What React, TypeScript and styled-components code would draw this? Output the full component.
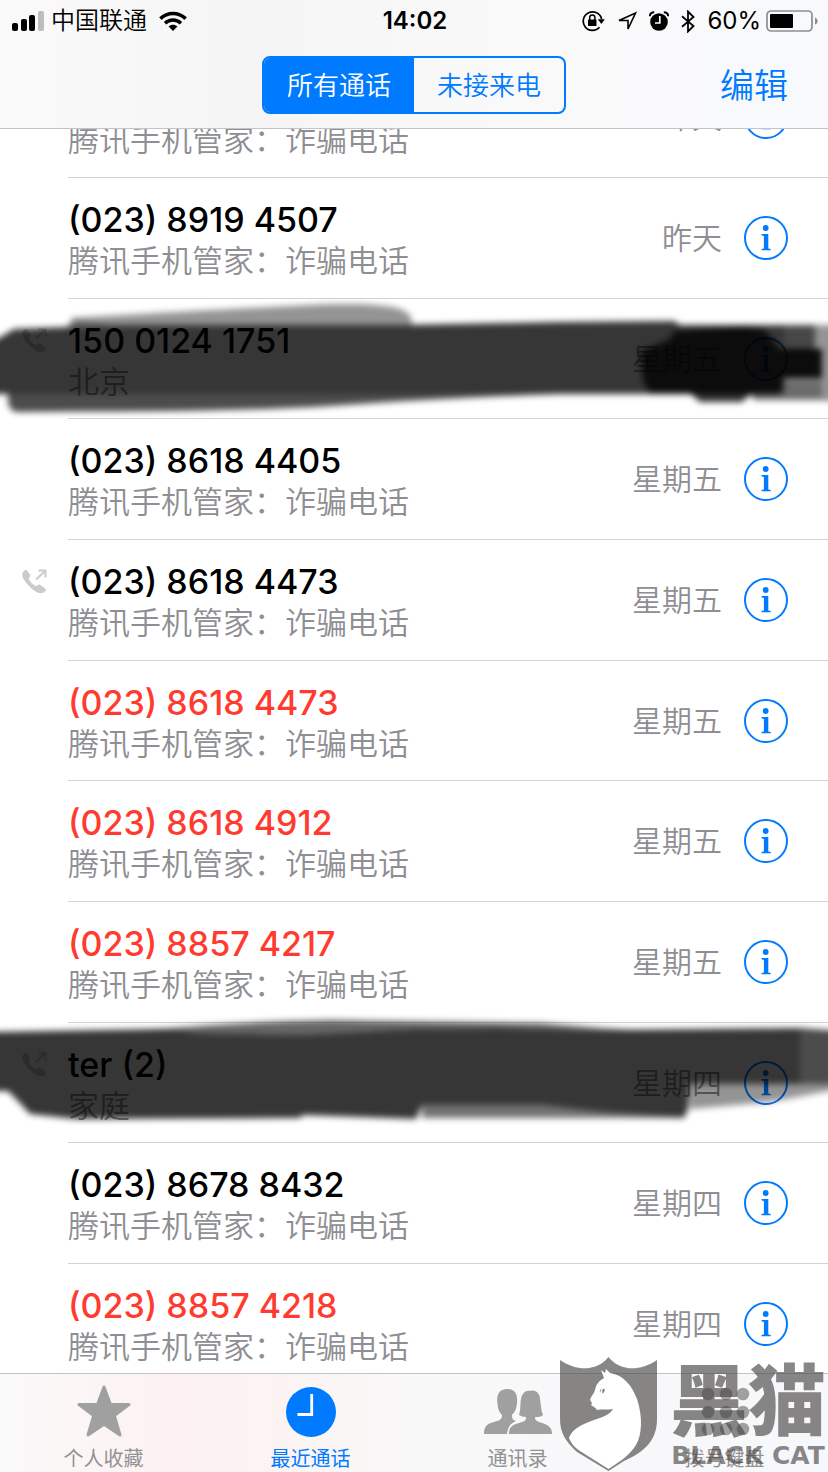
import React, { useState } from 'react'
import styled, { createGlobalStyle } from 'styled-components'

type SmearName = 'wide' | 'ragged'

interface Call {
  id: number
  title: string
  note: string
  day: string
  missed?: boolean
  outgoing?: boolean
  smear?: SmearName
}

const FRAUD = '腾讯手机管家：诈骗电话'

const calls: Call[] = [
  { id: 1, title: '(023) 8919 4507', note: FRAUD, day: '昨天' },
  { id: 2, title: '(023) 8919 4507', note: FRAUD, day: '昨天' },
  { id: 3, title: '150 0124 1751', note: '北京', day: '星期五', outgoing: true, smear: 'wide' },
  { id: 4, title: '(023) 8618 4405', note: FRAUD, day: '星期五' },
  { id: 5, title: '(023) 8618 4473', note: FRAUD, day: '星期五', outgoing: true },
  { id: 6, title: '(023) 8618 4473', note: FRAUD, day: '星期五', missed: true },
  { id: 7, title: '(023) 8618 4912', note: FRAUD, day: '星期五', missed: true },
  { id: 8, title: '(023) 8857 4217', note: FRAUD, day: '星期五', missed: true },
  { id: 9, title: 'ter (2)', note: '家庭', day: '星期四', outgoing: true, smear: 'ragged' },
  { id: 10, title: '(023) 8678 8432', note: FRAUD, day: '星期四' },
  { id: 11, title: '(023) 8857 4218', note: FRAUD, day: '星期四', missed: true },
]

const SignalIcon = () => (
  <svg width="32" height="20" viewBox="0 0 32 20">
    <rect x="0" y="12" width="6" height="8" rx="2" />
    <rect x="9" y="8" width="6" height="12" rx="2" />
    <rect x="17" y="4" width="6" height="16" rx="2" />
    <rect x="26" y="0" width="6" height="20" rx="2" fill="#bdbdbf" />
  </svg>
)

const WifiIcon = () => (
  <svg width="28" height="20" viewBox="0 0 28 20">
    <path d="M1.4 7.6C8.6.8 19.4.8 26.6 7.6" fill="none" stroke="#000" strokeWidth="3.6" />
    <path d="M6 12.2c4.7-4.2 11.3-4.2 16 0" fill="none" stroke="#000" strokeWidth="3.4" />
    <path d="M9.6 15.4c2.6-2.2 6.2-2.2 8.8 0L14 20z" />
  </svg>
)

const LockIcon = () => (
  <svg width="23" height="22" viewBox="0 0 23 22">
    <path d="M17.5 17.3A9.3 9.3 0 1 1 19.6 9" fill="none" stroke="#000" strokeWidth="1.7" />
    <path d="M15.8 9.2h7L19.4 14z" />
    <rect x="6" y="9.5" width="8.5" height="6.5" rx=".6" />
    <path d="M7.7 10V7.5a2.6 2.6 0 0 1 5.2 0V10" fill="none" stroke="#000" strokeWidth="1.5" />
  </svg>
)

const ArrowIcon = () => (
  <svg width="20" height="20" viewBox="0 0 20 20">
    <path d="M2 9.5 18.5 2 11 18V9.5z" fill="none" stroke="#000" strokeWidth="1.6" />
  </svg>
)

const AlarmIcon = () => (
  <svg width="20" height="20" viewBox="0 0 20 20">
    <circle cx="10" cy="11" r="8.8" />
    <path
      d="M.8 5.2C1 2.8 2.8 1.2 5.2 1.2M19.2 5.2C19 2.8 17.2 1.2 14.8 1.2"
      fill="none"
      stroke="#000"
      strokeWidth="2"
    />
    <path d="M10.8 5v7H6" fill="none" stroke="#fff" strokeWidth="1.7" />
  </svg>
)

const BluetoothIcon = () => (
  <svg width="14" height="23" viewBox="0 0 14 23">
    <path d="M1 6.3 12.5 16 7 21.5v-20L12.5 7 1 16.7" fill="none" stroke="#000" strokeWidth="1.8" />
  </svg>
)

const BatteryIcon = () => (
  <svg width="52" height="22" viewBox="0 0 52 22">
    <rect x="1" y="1" width="45" height="20" rx="4" fill="none" stroke="#8e8e90" strokeWidth="1.7" />
    <rect x="4" y="4" width="23" height="14" rx="1" />
    <path d="M49 7.5c3.5 1 3.5 6 0 7z" fill="#8e8e90" />
  </svg>
)

const OutgoingIcon = () => (
  <svg width="26" height="26" viewBox="0 0 26 26">
    <path
      d="M1 3C2 1.5 4 .5 5 1.5L8 5.5C8.8 6.8 7 8.5 6.8 9.5 7.5 12.5 11 16 14 17c1.5 0 2.5-2 4-1.2l5 3.7c1.3 1 1 2 0 3-3 3-8 2-13.5-3C3 13.5-1.5 7 1 3z"
      fill="#cbcbcd"
    />
    <path d="M14 10.5 23.5 1.5M16.5 1.5h7V8.5" fill="none" stroke="#cbcbcd" strokeWidth="2" />
  </svg>
)

const InfoIcon = () => (
  <svg width="44" height="44" viewBox="0 0 44 44">
    <circle cx="22" cy="22" r="21" fill="none" stroke="#007aff" strokeWidth="2" />
    <circle cx="21.7" cy="12" r="2.9" fill="#007aff" />
    <path d="M17.5 18h6.8v14.4l2.4.6v1.2h-9.2V33l2.4-.6V19.9l-2.4-.6z" fill="#007aff" />
  </svg>
)

const StarIcon = () => (
  <svg width="54" height="52" viewBox="0 0 54 52">
    <path
      d="M27 2 33.5 19.5H52L37.3 30.5 43 50 27 39.2 11 50 16.7 30.5 2 19.5H20.5z"
      fill="#a0a0a0"
      stroke="#a0a0a0"
      strokeWidth="3"
      strokeLinejoin="round"
    />
  </svg>
)

const ClockIcon = () => (
  <svg width="50" height="52" viewBox="0 0 50 52">
    <circle cx="25" cy="27" r="25" fill="#007aff" />
    <path d="M25.7 9v20.5H11.5" fill="none" stroke="#fff" strokeWidth="2.8" />
  </svg>
)

const PeopleIcon = () => (
  <svg width="68" height="52" viewBox="0 -4 68 52">
    <path
      d="M0 45C0 37 3 35 10 33c7-2 8-3 8-7-3-3-4-6-4.5-11C12 5 16 0 23 0s11 4 10 14c-.5 6-2 9-5 12 0 4 1 5 4 6-6 3-8 6-9 13z"
      fill="#a0a0a0"
    />
    <path
      d="M25 45c0-7 3-9 10-11s7-3 7-6c-3 0-5-1-7-2 2-6 1-12 2-16 1-6 5-9 9-8 6-2 10 3 10 8 1 6 1 12 3 16-2 2-5 2-8 2 0 3 1 4 7 6s10 4 10 11z"
      fill="#a0a0a0"
    />
  </svg>
)

const KeypadIcon = () => (
  <svg width="50" height="52" viewBox="0 0 50 52">
    {[9, 27, 44].map((y) =>
      [8, 26, 43].map((x) => <circle key={`${x}-${y}`} cx={x} cy={y} r="6.3" fill="#a0a0a0" />)
    )}
  </svg>
)

const WideSmear = () => (
  <SmearArt viewBox="0 288 828 140" preserveAspectRatio="none" aria-hidden="true">
    <defs>
      <filter id="soft-wide" x="-5%" y="-20%" width="110%" height="140%">
        <feGaussianBlur stdDeviation="3" />
      </filter>
    </defs>
    <g filter="url(#soft-wide)">
      <path d="M72 317C170 311 250 307 310 304c40-2 75-1 90 4 8 3 12 6 12 16H120L68 326z" opacity=".42" />
      <path d="M-10 342 4 334 14 328 68 326 120 324 400 324 560 321 674 320 680 324H784V393H-10z" opacity=".79" />
      <path d="M68 326 76 319 120 325z" opacity=".3" />
      <path d="M8 393H560C470 396 400 400 330 405 230 411 120 410 18 411 12 411 8 406 8 400z" opacity=".7" />
      <path d="M784 324h31v28h-31z" opacity=".72" />
      <path d="M750 393h34v-14h38v20H754z" opacity=".58" />
      <path d="M815 324h25v76h-18V352h-7z" opacity=".42" />
      <path d="M784 348h38v30h-38z" opacity=".8" />
      <path d="M641 350 670 338 674 330 745 326 765 329 780 348H822V377H783V388L778 393H650L643 380z" opacity=".77" />
      <path d="M690 392h62l-10 9h-42z" opacity=".8" />
    </g>
  </SmearArt>
)

const RaggedSmear = () => (
  <SmearArt viewBox="0 1012 828 140" preserveAspectRatio="none" aria-hidden="true">
    <defs>
      <filter id="soft-ragged" x="-5%" y="-20%" width="110%" height="140%">
        <feGaussianBlur stdDeviation="3" />
      </filter>
    </defs>
    <g filter="url(#soft-ragged)">
      <path d="M150 1029C210 1023 270 1020 330 1019L540 1022 630 1029 500 1027 414 1028 300 1034 200 1032z" opacity=".6" />
      <path
        d="M-10 1031 160 1028 200 1032 300 1034 414 1028 500 1027 600 1029 800 1027V1083H690L688 1108 684 1117 600 1111 540 1104 422 1104 416 1118 303 1114 300 1117 76 1118 30 1113 18 1100 8 1090H-10z"
        opacity=".79"
      />
      <path d="M422 1104H540L600 1111 684 1117H422z" opacity=".55" />
      <path d="M800 1027 828 1029H840V1083H800z" opacity=".7" />
      <path d="M690 1083H840V1088L770 1101 690 1108z" opacity=".42" />
    </g>
  </SmearArt>
)

const smears = { wide: WideSmear, ragged: RaggedSmear }

const ShieldLogo = () => (
  <svg width="98" height="114" viewBox="0 0 98 114">
    <path
      d="M0 3C18 15 37 14 48.5 0 60 14 79 15 97 3V62C97 84 84 95 64 104L48.5 114 17 95C6 85 0 76 0 62z"
      fill="#464242"
      opacity=".64"
    />
    <path
      d="M41 13 45 16 46 12 50 16C64 18 72 29 77 42 83 60 82 78 76 88 70 97 64 102 48.5 112L20 94C14 90 11 86 9 81 11 74 19 68 34 63 44 60 50 57 53 52 47 53 41 52 37 53 35 50 32 49 31 48L32 46 30 43C31 39 34 37 35 33 36 27 39 24 44 21z"
      fill="#fff"
    />
    <path d="M40 36c-.5-2 .2-3.6 1.6-4.6zM42.2 36.5c2-.8 3-2.8 2.3-5-1 .2-1.9.8-2.3 1.8z" fill="#858282" />
  </svg>
)

const tabs = [
  { id: 'favorites', label: '个人收藏', icon: <StarIcon /> },
  { id: 'recents', label: '最近通话', icon: <ClockIcon /> },
  { id: 'contacts', label: '通讯录', icon: <PeopleIcon /> },
  { id: 'keypad', label: '拨号键盘', icon: <KeypadIcon /> },
]

const CallRow: React.FC<{ call: Call }> = ({ call }) => {
  const Smear = call.smear && smears[call.smear]

  return (
    <Row>
      <Kind>{call.outgoing && <OutgoingIcon />}</Kind>
      <RowBody>
        <Caller>
          <Title $missed={call.missed}>{call.title}</Title>
          <Note>{call.note}</Note>
        </Caller>
        <Day>{call.day}</Day>
        <InfoButton type="button" aria-label="详情">
          <InfoIcon />
        </InfoButton>
      </RowBody>
      {Smear && <Smear />}
    </Row>
  )
}

const App: React.FC = () => {
  const [filter, setFilter] = useState('all')
  const [tab, setTab] = useState('recents')

  return (
    <Screen>
      <GlobalStyle />
      <Header>
        <StatusBar>
          <StatusLeft>
            <SignalIcon />
            <Carrier>中国联通</Carrier>
            <WifiIcon />
          </StatusLeft>
          <Time>14:02</Time>
          <StatusRight>
            <LockIcon />
            <ArrowIcon />
            <AlarmIcon />
            <BluetoothIcon />
            <Battery>
              60%
              <BatteryIcon />
            </Battery>
          </StatusRight>
        </StatusBar>
        <NavBar>
          <Segments>
            <Segment type="button" $active={filter === 'all'} onClick={() => setFilter('all')}>
              所有通话
            </Segment>
            <Segment type="button" $active={filter === 'missed'} onClick={() => setFilter('missed')}>
              未接来电
            </Segment>
          </Segments>
          <EditButton type="button">编辑</EditButton>
        </NavBar>
      </Header>
      <Main>
        <CallList>
          {calls.map((call) => (
            <CallRow key={call.id} call={call} />
          ))}
        </CallList>
      </Main>
      <TabBar>
        {tabs.map(({ id, label, icon }) => (
          <Tab key={id} type="button" $active={tab === id} onClick={() => setTab(id)}>
            {icon}
            {label}
          </Tab>
        ))}
      </TabBar>
      <Watermark>
        <ShieldLogo />
        <Brand>
          <BrandName>黑猫</BrandName>
          <BrandLatin>BLACK CAT</BrandLatin>
        </Brand>
      </Watermark>
    </Screen>
  )
}

const GlobalStyle = createGlobalStyle`
  * {
    box-sizing: border-box;
  }

  body {
    margin: 0;
    background: #fff;
    font-family: Inter, 'Noto Sans CJK SC', sans-serif;
  }

  button {
    margin: 0;
    padding: 0;
    border: 0;
    background: none;
    font-family: inherit;
    cursor: pointer;
  }

  svg {
    display: block;
    flex-shrink: 0;
  }
`

const Screen = styled.div`
  position: relative;
  display: flex;
  flex-direction: column;
  height: 100vh;
  overflow: hidden;
`

const Header = styled.header`
  position: relative;
  z-index: 1;
  background: linear-gradient(90deg, #fafafb, #f5f5f6 30%, #f9f9f9 60%, #f8f9fc);
  border-bottom: 1px solid #c4c4c6;
`

const StatusBar = styled.div`
  display: grid;
  grid-template-columns: 1fr auto 1fr;
  align-items: center;
  height: 42px;
  padding: 0 10px 0 12px;
  font-size: 24px;
  line-height: 24px;
`

const StatusLeft = styled.div`
  display: flex;
  align-items: center;
  gap: 12px;
`

const Carrier = styled.span`
  margin-left: -5px;
  font-weight: 350;
`

const Time = styled.span`
  font-weight: 600;
`

const StatusRight = styled.div`
  display: flex;
  align-items: center;
  justify-content: flex-end;
  gap: 12px;
`

const Battery = styled.span`
  display: flex;
  align-items: center;
  gap: 5px;
`

const NavBar = styled.div`
  display: grid;
  grid-template-columns: 1fr 304px 1fr;
  align-items: center;
  height: 86px;
  padding: 0 40px;
`

const Segments = styled.div`
  grid-column: 2;
  display: flex;
  height: 58px;
  border: 2px solid #007aff;
  border-radius: 8px;
  overflow: hidden;
`

const Segment = styled.button<{ $active: boolean }>`
  flex: 1;
  padding-bottom: 4px;
  font-size: 26px;
  font-weight: 350;
  color: ${({ $active }) => ($active ? '#fff' : '#007aff')};
  background: ${({ $active }) => ($active ? '#007aff' : 'transparent')};
`

const EditButton = styled.button`
  justify-self: end;
  padding-bottom: 4px;
  font-size: 34px;
  font-weight: 350;
  color: #007aff;
`

const Main = styled.main`
  flex: 1;
  min-height: 0;
  overflow: hidden;
`

/* scrolled so that the first call is half under the header */
const CallList = styled.ul`
  margin: -72px 0 0;
  padding: 0;
  list-style: none;
`

const Row = styled.li`
  position: relative;
  display: flex;
  height: 121px;

  &:nth-child(3n) {
    height: 120px;
  }
`

const Kind = styled.div`
  width: 68px;
  padding: 29px 0 0 22px;
`

const RowBody = styled.div`
  flex: 1;
  display: flex;
  align-items: center;
  gap: 22px;
  padding-right: 40px;
  border-bottom: 1px solid #d4d4d8;
`

const Caller = styled.div`
  flex: 1;
  padding-top: 4px;
`

const Title = styled.div<{ $missed?: boolean }>`
  font-size: 34px;
  font-weight: 550;
  line-height: 42px;
  color: ${({ $missed }) => ($missed ? '#ff3b30' : '#000')};
`

const Note = styled.div`
  font-size: 31px;
  font-weight: 350;
  line-height: 40px;
  color: #8e8e93;
`

const Day = styled.span`
  padding-bottom: 4px;
  font-size: 30px;
  font-weight: 350;
  color: #8e8e93;
`

const InfoButton = styled.button`
  width: 44px;
  height: 44px;
`

const SmearArt = styled.svg`
  position: absolute;
  top: -10px;
  left: 0;
  z-index: 1;
  width: 100%;
  height: 140px;
  pointer-events: none;
`

const TabBar = styled.nav`
  position: relative;
  display: grid;
  grid-template-columns: repeat(4, 1fr);
  height: 99px;
  background: linear-gradient(90deg, #faf9fa, #fdf2f1 20%, #fcf3f2 32%, #f9f8f9 50%, #f7f8fb);
  border-top: 1px solid #c4c4c6;
`

const Tab = styled.button<{ $active: boolean }>`
  display: flex;
  flex-direction: column;
  align-items: center;
  gap: 8px;
  padding-top: 11px;
  font-size: 20px;
  line-height: 28px;
  color: ${({ $active }) => ($active ? '#007aff' : '#929292')};
`

const Watermark = styled.div`
  position: absolute;
  right: 2px;
  bottom: 1px;
  z-index: 2;
  display: flex;
  gap: 12px;
  pointer-events: none;
`

const Brand = styled.div`
  display: flex;
  flex-direction: column;
  align-items: center;
  padding-top: 6px;
  color: rgba(70, 66, 66, 0.64);
`

const BrandName = styled.span`
  font-size: 78px;
  font-weight: 900;
  line-height: 78px;
`

const BrandLatin = styled.span`
  font-family: 'DejaVu Sans', sans-serif;
  font-size: 25px;
  font-weight: 700;
  line-height: 30px;
`

export default App
